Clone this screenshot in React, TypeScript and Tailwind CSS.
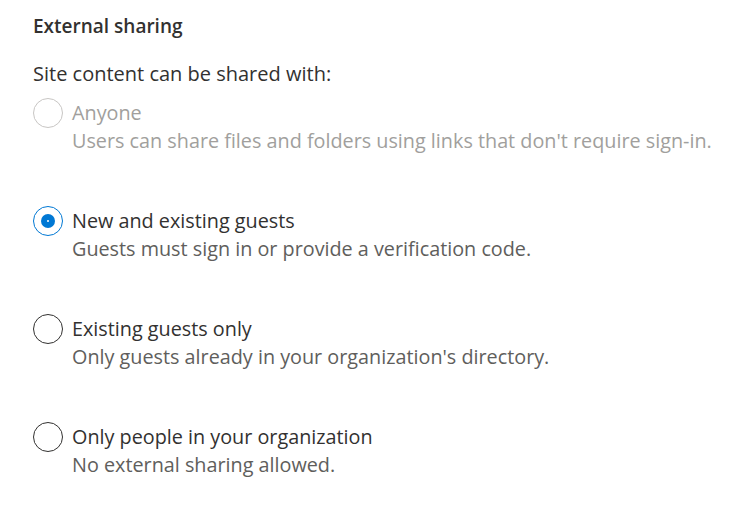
import { useState } from "react";

const OPTIONS = [
    { id: "anyone", label: "Anyone", desc: "Users can share files and folders using links that don't require sign-in.", disabled: true },
    { id: "new", label: "New and existing guests", desc: "Guests must sign in or provide a verification code." },
    { id: "existing", label: "Existing guests only", desc: "Only guests already in your organization's directory." },
    { id: "org", label: "Only people in your organization", desc: "No external sharing allowed." },
];

const App = () => {
    const [value, setValue] = useState("new");

    return (
        <div className="min-h-[511px] w-[750px] bg-white pl-[33px] pt-[11px] text-[#323130] [font-family:'Open_Sans',sans-serif]">
            <h2 className="text-[19px] font-semibold leading-[30px]">External sharing</h2>
            <div className="mt-[18px] text-[20px] leading-[30px]">Site content can be shared with:</div>

            <div className="mt-[10px] flex flex-col gap-[52px]">
                {OPTIONS.map((opt) => {
                    const checked = value === opt.id;
                    return (
                        <label
                            key={opt.id}
                            className={`flex items-start gap-[9px] ${opt.disabled ? "cursor-default text-[#a19f9d]" : "cursor-pointer"}`}
                            onClick={() => !opt.disabled && setValue(opt.id)}
                        >
                            <span
                                className={`mt-[-1px] flex h-[30px] w-[30px] shrink-0 items-center justify-center rounded-full border ${
                                    opt.disabled ? "border-[#c8c6c4]" : checked ? "border-[#0078d4]" : "border-[#323130]"
                                }`}
                            >
                                {checked && (
                                    <span className="flex h-[14px] w-[14px] items-center justify-center rounded-full bg-[#0078d4]">
                                        <span className="h-[2px] w-[2px] rounded-full bg-white" />
                                    </span>
                                )}
                            </span>
                            <span className="flex flex-col text-[19.8px] leading-[28px]">
                                <span className={opt.disabled ? "text-[#a19f9d]" : "text-[#323130]"}>{opt.label}</span>
                                <span className={opt.disabled ? "text-[#a19f9d]" : "text-[#605e5c]"}>{opt.desc}</span>
                            </span>
                        </label>
                    );
                })}
            </div>
        </div>
    );
};

export default App;
